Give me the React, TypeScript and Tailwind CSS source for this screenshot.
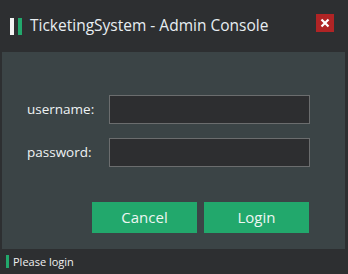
import React from "react";

export default function App() {
  return (
    <div className="w-[348px] h-[274px] bg-[#2d2f31] flex flex-col overflow-hidden" style={{ fontFamily: '"Open Sans", "Noto Sans", sans-serif' }}>
      <div className="h-[52px] shrink-0 flex items-center relative">
        <div className="w-[4px] h-[17px] bg-[#f4f4f4] ml-[10px]" />
        <div className="w-[4px] h-[17px] bg-[#22a86c] ml-[4px]" />
        <div className="ml-[8px] text-[15.5px] text-[#e8eef2] leading-none">TicketingSystem - Admin Console</div>
        <div className="absolute left-[316px] top-[14px] w-[18px] h-[18px] bg-[#b02425] flex items-center justify-center">
          <svg width="10" height="10" viewBox="0 0 10 10">
            <path d="M1.5 1.5 L8.5 8.5 M8.5 1.5 L1.5 8.5" stroke="#ffffff" strokeWidth="2.2" />
          </svg>
        </div>
      </div>
      <div className="mx-[2px] w-[343px] h-[197px] bg-[#3b4446] flex flex-col">
        <div className="mt-[43px] flex items-center h-[29px]">
          <div className="w-[107px] pl-[25px] text-[13.5px] text-[#eef2f4]">username:</div>
          <div className="w-[201px] h-[29px] bg-[#2d2e30] border border-[#6b6d6e]" />
        </div>
        <div className="mt-[14px] flex items-center h-[29px]">
          <div className="w-[107px] pl-[25px] text-[13.5px] text-[#eef2f4]">password:</div>
          <div className="w-[201px] h-[29px] bg-[#2d2e30] border border-[#6b6d6e]" />
        </div>
        <div className="mt-[35px] flex gap-[7px] pl-[90px]">
          <div className="w-[105px] h-[31px] bg-[#22a86c] flex items-center justify-center text-[15px] text-[#eef6f2]">Cancel</div>
          <div className="w-[105px] h-[31px] bg-[#22a86c] flex items-center justify-center text-[15px] text-[#eef6f2]">Login</div>
        </div>
      </div>
      <div className="flex-1 flex items-center">
        <div className="ml-[6px] w-[3px] h-[13px] bg-[#22a86c]" />
        <div className="ml-[4px] text-[11px] text-[#f0f0f0] leading-none">Please login</div>
      </div>
    </div>
  );
}
